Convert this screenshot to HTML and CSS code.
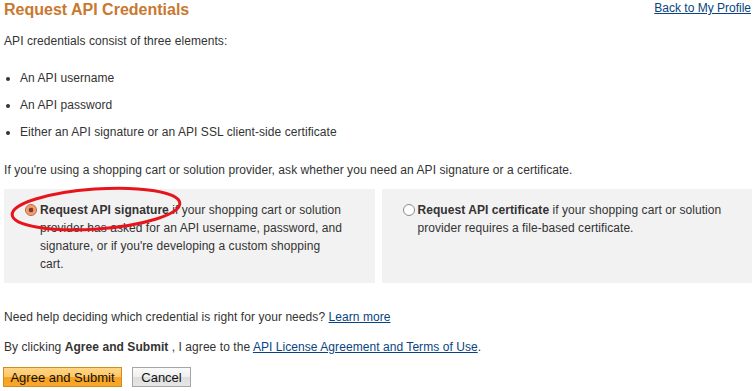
FILE: index.html
```html
<!DOCTYPE html>
<html lang="en">
<head>
    <meta charset="UTF-8">
    <title>Request API Credentials</title>
    <link rel="stylesheet" href="styles.css">
</head>
<body>
    <div class="page">
        <div class="header">
            <h1>Request API Credentials</h1>
            <a href="#" class="back">Back to My Profile</a>
        </div>
        <p class="intro">API credentials consist of three elements:</p>
        <ul class="elements">
            <li>An API username</li>
            <li>An API password</li>
            <li>Either an API signature or an API SSL client-side certificate</li>
        </ul>
        <p class="ask">If you're using a shopping cart or solution provider, ask whether you need an API signature or a certificate.</p>

        <div class="choices">
            <label class="choice">
                <input type="radio" name="cred" checked>
                <span><b>Request API signature</b> if your shopping cart or solution provider has asked for an API username, password, and signature, or if you're developing a custom shopping cart.</span>
                <svg class="circle" width="180" height="52" viewBox="0 0 180 52">
                    <ellipse cx="88" cy="26" rx="84" ry="20" transform="rotate(-4 88 26)" fill="none" stroke="#e8141b" stroke-width="3"/>
                </svg>
            </label>
            <label class="choice">
                <input type="radio" name="cred">
                <span><b>Request API certificate</b> if your shopping cart or solution provider requires a file-based certificate.</span>
            </label>
        </div>

        <p class="help">Need help deciding which credential is right for your needs? <a href="#">Learn more</a></p>
        <p class="terms">By clicking <b>Agree and Submit</b> , I agree to the <a href="#">API License Agreement and Terms of Use</a>.</p>
        <div class="actions">
            <button class="btn btn-primary">Agree and Submit</button>
            <button class="btn btn-cancel">Cancel</button>
        </div>
    </div>
</body>
</html>
```

FILE: styles.css
```css
body {
    margin: 0;
    font-family: "Liberation Sans", Arial, sans-serif;
    font-size: 12px;
    letter-spacing: 0.06px;
    color: #333;
    background: #fff;
}
.page {
    padding: 0 4px;
}
a { color: #084482; }
.header {
    display: flex;
    justify-content: space-between;
    align-items: flex-start;
}
h1 {
    margin: 0;
    padding-top: 1px;
    font-size: 16px;
    color: #c9782f;
    line-height: 18px;
    letter-spacing: 0;
}
.back {
    font-size: 12px;
    margin-top: 1px;
    margin-right: 1px;
    letter-spacing: 0;
}
.intro {
    margin: 15px 0 0;
    line-height: 14px;
}
.elements {
    margin: 23px 0 0;
    padding-left: 16px;
    line-height: 14px;
}
.elements li {
    margin-bottom: 13px;
}
.elements li:last-child {
    margin-bottom: 0;
}
.ask {
    margin: 24px 0 0;
    line-height: 14px;
}
.choices {
    display: flex;
    gap: 7px;
    margin-top: 12px;
}
.choice {
    position: relative;
    flex: 1;
    display: flex;
    align-items: flex-start;
    background: #f2f2f2;
    padding: 12px 29px 10px 21px;
    line-height: 18px;
    min-height: 72px;
}
.choice input {
    appearance: none;
    width: 12px;
    height: 12px;
    margin: 3px 3px 0 0;
    border: 1px solid #8c8c8c;
    border-radius: 50%;
    background: #fff;
    flex: none;
}
.choice input:checked {
    border-color: #c0623a;
    background: radial-gradient(circle, #7a3d28 0 2px, #f08a5d 2.5px, #f7b89a 6px);
}
.circle {
    position: absolute;
    left: 4px;
    top: -6px;
    pointer-events: none;
}
.help {
    margin: 27px 0 0;
    line-height: 14px;
}
.terms {
    margin: 16px 0 0;
    line-height: 14px;
}
.actions {
    display: flex;
    gap: 10px;
    margin-top: 13px;
}
.btn {
    font-family: "Liberation Sans", Arial, sans-serif;
    font-size: 13px;
    height: 20px;
    padding: 0;
    white-space: nowrap;
    color: #111;
    cursor: pointer;
}
.btn-primary {
    margin-left: -1px;
    width: 119px;
    border: 1px solid #d08c1d;
    background: linear-gradient(#ffd586 0, #ffc766 50%, #f7a31f 51%, #f9a72b 100%);
}
.btn-cancel {
    width: 59px;
    border: 1px solid #a6a6a6;
    background: linear-gradient(#fafafa 0, #efefef 50%, #dedede 51%, #e6e6e6 100%);
}
```
